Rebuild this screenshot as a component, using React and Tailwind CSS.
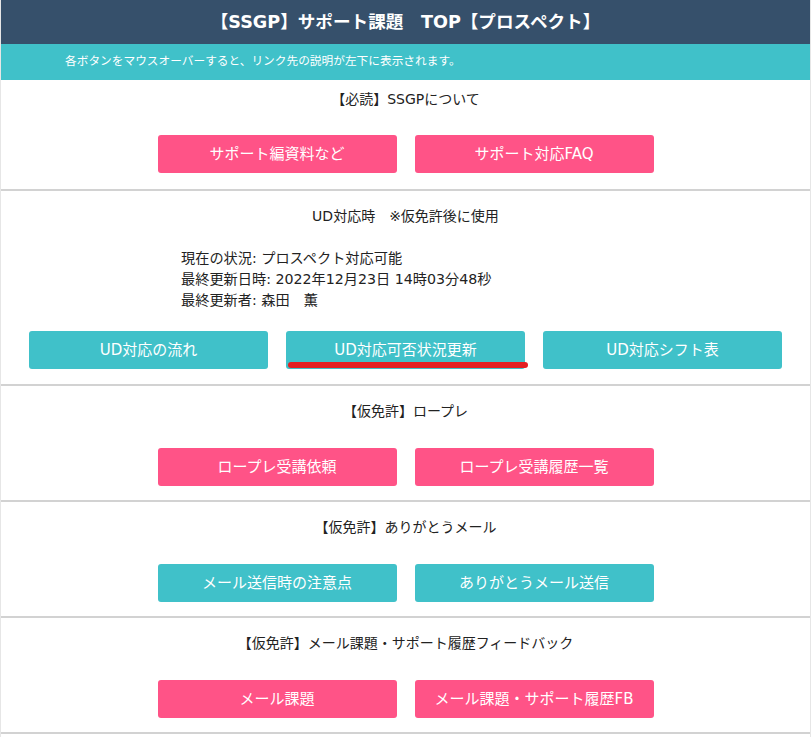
import React from "react";

const PINK = "bg-[#ff5387]";
const TEAL = "bg-[#40c1c9]";

function Btn({ color, children, className = "" }) {
  return (
    <div
      className={`${color} w-[239px] h-[38px] rounded-[3px] flex items-center justify-center text-white text-[15px] ${className}`}
    >
      {children}
    </div>
  );
}

function Section({ title, children, top = "pt-[8px]", bottom = "pb-[14px]" }) {
  return (
    <div className={`border-b-2 border-[#d2d2d2] ${top} ${bottom}`}>
      <div className="text-center text-[14px] leading-[22px] text-[#222]">{title}</div>
      {children}
    </div>
  );
}

export default function App() {
  return (
    <div
      className="w-[811px] bg-white border-l border-r border-[#e6e6e6] min-h-[737px]"
      style={{ fontFamily: '"DejaVu Sans", "Noto Sans CJK JP", sans-serif' }}
    >
      <div className="h-[44px] bg-[#36506b] flex items-center justify-center text-white text-[17.6px] font-bold">
        【SSGP】サポート課題　TOP【プロスペクト】
      </div>
      <div className="h-[36px] bg-[#40c1c9] flex items-center pl-[64px] text-white text-[11.7px]">
        各ボタンをマウスオーバーすると、リンク先の説明が左下に表示されます。
      </div>

      <Section title="【必読】SSGPについて" top="pt-[8px]" bottom="pb-[16px]">
        <div className="flex justify-center gap-[18px] mt-[25px]">
          <Btn color={PINK}>サポート編資料など</Btn>
          <Btn color={PINK}>サポート対応FAQ</Btn>
        </div>
      </Section>

      <Section title="UD対応時　※仮免許後に使用" top="pt-[14px]" bottom="pb-[15px]">
        <div className="pl-[180px] mt-[21px] text-[14.2px] leading-[21px] text-[#222]">
          <div>現在の状況: プロスペクト対応可能</div>
          <div>最終更新日時: 2022年12月23日 14時03分48秒</div>
          <div>最終更新者: 森田　薫</div>
        </div>
        <div className="flex justify-center gap-[18px] mt-[20px]">
          <Btn color={TEAL}>UD対応の流れ</Btn>
          <div className="relative">
            <Btn color={TEAL}>UD対応可否状況更新</Btn>
            <div className="absolute left-[2px] top-[31px] w-[240px] h-[6px] rounded-full bg-[#e41f22]" />
          </div>
          <Btn color={TEAL}>UD対応シフト表</Btn>
        </div>
      </Section>

      <Section title="【仮免許】ロープレ" top="pt-[14px]">
        <div className="flex justify-center gap-[18px] mt-[26px]">
          <Btn color={PINK}>ロープレ受講依頼</Btn>
          <Btn color={PINK}>ロープレ受講履歴一覧</Btn>
        </div>
      </Section>

      <Section title="【仮免許】ありがとうメール" top="pt-[14px]">
        <div className="flex justify-center gap-[18px] mt-[26px]">
          <Btn color={TEAL}>メール送信時の注意点</Btn>
          <Btn color={TEAL}>ありがとうメール送信</Btn>
        </div>
      </Section>

      <Section title="【仮免許】メール課題・サポート履歴フィードバック" top="pt-[14px]">
        <div className="flex justify-center gap-[18px] mt-[26px]">
          <Btn color={PINK}>メール課題</Btn>
          <Btn color={PINK}>メール課題・サポート履歴FB</Btn>
        </div>
      </Section>
    </div>
  );
}
